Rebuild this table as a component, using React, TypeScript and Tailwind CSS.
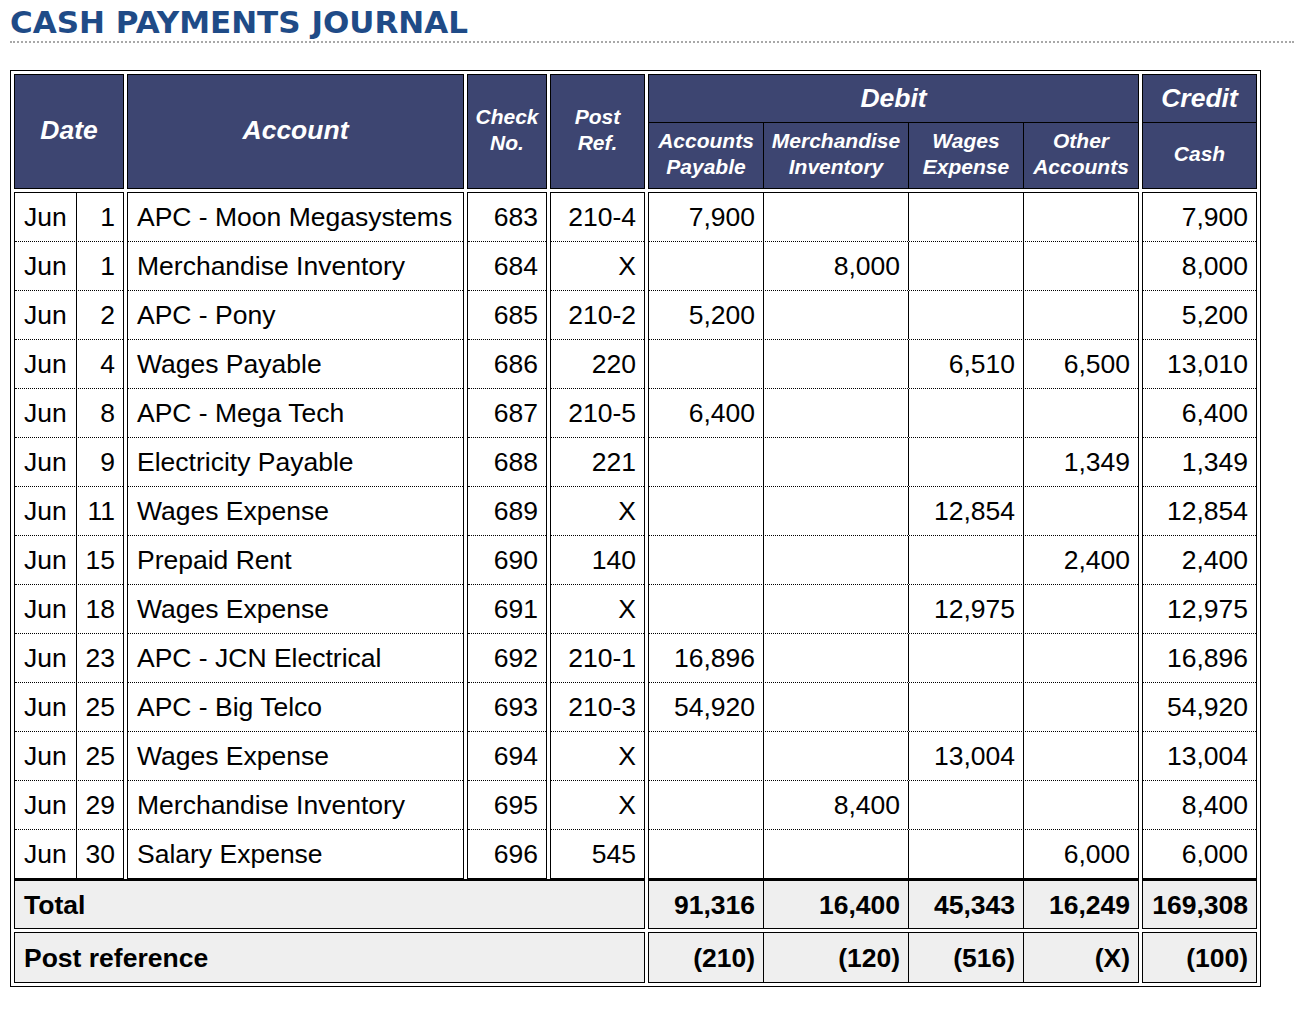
import React from "react";

type Entry = {
  day: string;
  account: string;
  check: string;
  post: string;
  debit: [string, string, string, string];
  cash: string;
};

const entries: Entry[] = [
  { day: "1", account: "APC - Moon Megasystems", check: "683", post: "210-4", debit: ["7,900", "", "", ""], cash: "7,900" },
  { day: "1", account: "Merchandise Inventory", check: "684", post: "X", debit: ["", "8,000", "", ""], cash: "8,000" },
  { day: "2", account: "APC - Pony", check: "685", post: "210-2", debit: ["5,200", "", "", ""], cash: "5,200" },
  { day: "4", account: "Wages Payable", check: "686", post: "220", debit: ["", "", "6,510", "6,500"], cash: "13,010" },
  { day: "8", account: "APC - Mega Tech", check: "687", post: "210-5", debit: ["6,400", "", "", ""], cash: "6,400" },
  { day: "9", account: "Electricity Payable", check: "688", post: "221", debit: ["", "", "", "1,349"], cash: "1,349" },
  { day: "11", account: "Wages Expense", check: "689", post: "X", debit: ["", "", "12,854", ""], cash: "12,854" },
  { day: "15", account: "Prepaid Rent", check: "690", post: "140", debit: ["", "", "", "2,400"], cash: "2,400" },
  { day: "18", account: "Wages Expense", check: "691", post: "X", debit: ["", "", "12,975", ""], cash: "12,975" },
  { day: "23", account: "APC - JCN Electrical", check: "692", post: "210-1", debit: ["16,896", "", "", ""], cash: "16,896" },
  { day: "25", account: "APC - Big Telco", check: "693", post: "210-3", debit: ["54,920", "", "", ""], cash: "54,920" },
  { day: "25", account: "Wages Expense", check: "694", post: "X", debit: ["", "", "13,004", ""], cash: "13,004" },
  { day: "29", account: "Merchandise Inventory", check: "695", post: "X", debit: ["", "8,400", "", ""], cash: "8,400" },
  { day: "30", account: "Salary Expense", check: "696", post: "545", debit: ["", "", "", "6,000"], cash: "6,000" },
];

const totals = ["91,316", "16,400", "45,343", "16,249"];
const postRefs = ["(210)", "(120)", "(516)", "(X)"];

// widths of the debit sub columns, right border included
const debitCols = ["w-[115px] border-r border-black", "w-[145px] border-r border-black", "w-[115px] border-r border-black", "w-[114px]"];

const rowClass = (i: number) =>
  i < entries.length - 1 ? "h-[49px] border-b border-dotted border-black" : "h-[48px]";

const HeadText = ({ children, small }: { children: React.ReactNode; small?: boolean }) => (
  <div
    className={`text-white font-bold italic text-center ${
      small ? "text-[21px] leading-[26px]" : "text-[26.5px] leading-[30px]"
    }`}
  >
    {children}
  </div>
);

const TextColumn = ({ width, values, align }: { width: string; values: string[]; align: "left" | "right" }) => (
  <div className={`${width} h-[687px] border border-black bg-white flex flex-col`}>
    {values.map((v, i) => (
      <div
        key={i}
        className={`${rowClass(i)} flex items-center px-2 ${align === "right" ? "justify-end" : "justify-start pl-[9px]"}`}
      >
        {v}
      </div>
    ))}
  </div>
);

export default function App() {
  return (
    <div className="w-[1294px] h-[1014px] bg-white text-black font-['Liberation_Sans',Arial,sans-serif] text-[26.5px] leading-[30px]">
      <div className="pt-[4px] ml-[10px] border-b-2 border-dotted border-[#a8a8a8]">
        <h1 className="font-['DejaVu_Sans',Verdana,sans-serif] font-bold text-[31px] leading-[37px] text-[#1f4b87]">
          CASH PAYMENTS JOURNAL
        </h1>
      </div>

      <div className="mt-[27px] ml-[10px] w-[1251px] border border-black p-[3px] flex flex-col gap-[3px]">
        {/* header */}
        <div className="flex gap-[3px] h-[115px]">
          <div className="w-[110px] border border-black bg-[#3d4571] flex items-center justify-center pb-[3px]">
            <HeadText>Date</HeadText>
          </div>
          <div className="w-[337px] border border-black bg-[#3d4571] flex items-center justify-center pb-[3px]">
            <HeadText>Account</HeadText>
          </div>
          <div className="w-[80px] border border-black bg-[#3d4571] flex items-center justify-center pb-[3px]">
            <HeadText small>
              Check
              <br />
              No.
            </HeadText>
          </div>
          <div className="w-[95px] border border-black bg-[#3d4571] flex items-center justify-center pb-[3px]">
            <HeadText small>
              Post
              <br />
              Ref.
            </HeadText>
          </div>
          <div className="w-[491px] border border-black bg-[#3d4571] flex flex-col">
            <div className="h-[48px] border-b border-black flex items-center justify-center pb-[2px]">
              <HeadText>Debit</HeadText>
            </div>
            <div className="flex-1 flex">
              {[
                ["Accounts", "Payable"],
                ["Merchandise", "Inventory"],
                ["Wages", "Expense"],
                ["Other", "Accounts"],
              ].map(([a, b], i) => (
                <div key={i} className={`${debitCols[i]} flex items-center justify-center pb-[3px]`}>
                  <HeadText small>
                    {a}
                    <br />
                    {b}
                  </HeadText>
                </div>
              ))}
            </div>
          </div>
          <div className="w-[115px] border border-black bg-[#3d4571] flex flex-col">
            <div className="h-[48px] border-b border-black flex items-center justify-center pb-[2px]">
              <HeadText>Credit</HeadText>
            </div>
            <div className="flex-1 flex items-center justify-center pb-[3px]">
              <HeadText small>Cash</HeadText>
            </div>
          </div>
        </div>

        {/* body and totals */}
        <div className="flex gap-[3px]">
          <div className="w-[631px] flex flex-col">
            <div className="flex gap-[3px]">
              <div className="w-[110px] h-[687px] border border-black bg-white flex flex-col">
                {entries.map((e, i) => (
                  <div key={i} className={`${rowClass(i)} flex`}>
                    <div className="w-[62px] border-r border-black flex items-center pl-[9px]">Jun</div>
                    <div className="flex-1 flex items-center justify-end pr-2">{e.day}</div>
                  </div>
                ))}
              </div>
              <TextColumn width="w-[337px]" values={entries.map((e) => e.account)} align="left" />
              <TextColumn width="w-[80px]" values={entries.map((e) => e.check)} align="right" />
              <TextColumn width="w-[95px]" values={entries.map((e) => e.post)} align="right" />
            </div>
            <div className="h-[50px] border border-t-2 border-black bg-[#efefef] flex items-center pl-[9px] font-bold">
              Total
            </div>
          </div>

          <div className="w-[491px] flex flex-col">
            <div className="h-[687px] border border-black bg-white flex flex-col">
              {entries.map((e, i) => (
                <div key={i} className={`${rowClass(i)} flex`}>
                  {e.debit.map((v, j) => (
                    <div key={j} className={`${debitCols[j]} flex items-center justify-end pr-2`}>
                      {v}
                    </div>
                  ))}
                </div>
              ))}
            </div>
            <div className="h-[50px] border border-t-2 border-black bg-[#efefef] flex font-bold">
              {totals.map((v, j) => (
                <div key={j} className={`${debitCols[j]} flex items-center justify-end pr-2`}>
                  {v}
                </div>
              ))}
            </div>
          </div>

          <div className="w-[115px] flex flex-col">
            <TextColumn width="w-[115px]" values={entries.map((e) => e.cash)} align="right" />
            <div className="h-[50px] border border-t-2 border-black bg-[#efefef] flex items-center justify-end pr-2 font-bold">
              169,308
            </div>
          </div>
        </div>

        {/* post reference */}
        <div className="flex gap-[3px] h-[51px]">
          <div className="w-[631px] border border-black bg-[#efefef] flex items-center pl-[9px] font-bold">
            Post reference
          </div>
          <div className="w-[491px] border border-black bg-[#efefef] flex font-bold">
            {postRefs.map((v, j) => (
              <div key={j} className={`${debitCols[j]} flex items-center justify-end pr-2`}>
                {v}
              </div>
            ))}
          </div>
          <div className="w-[115px] border border-black bg-[#efefef] flex items-center justify-end pr-2 font-bold">
            (100)
          </div>
        </div>
      </div>
    </div>
  );
}
